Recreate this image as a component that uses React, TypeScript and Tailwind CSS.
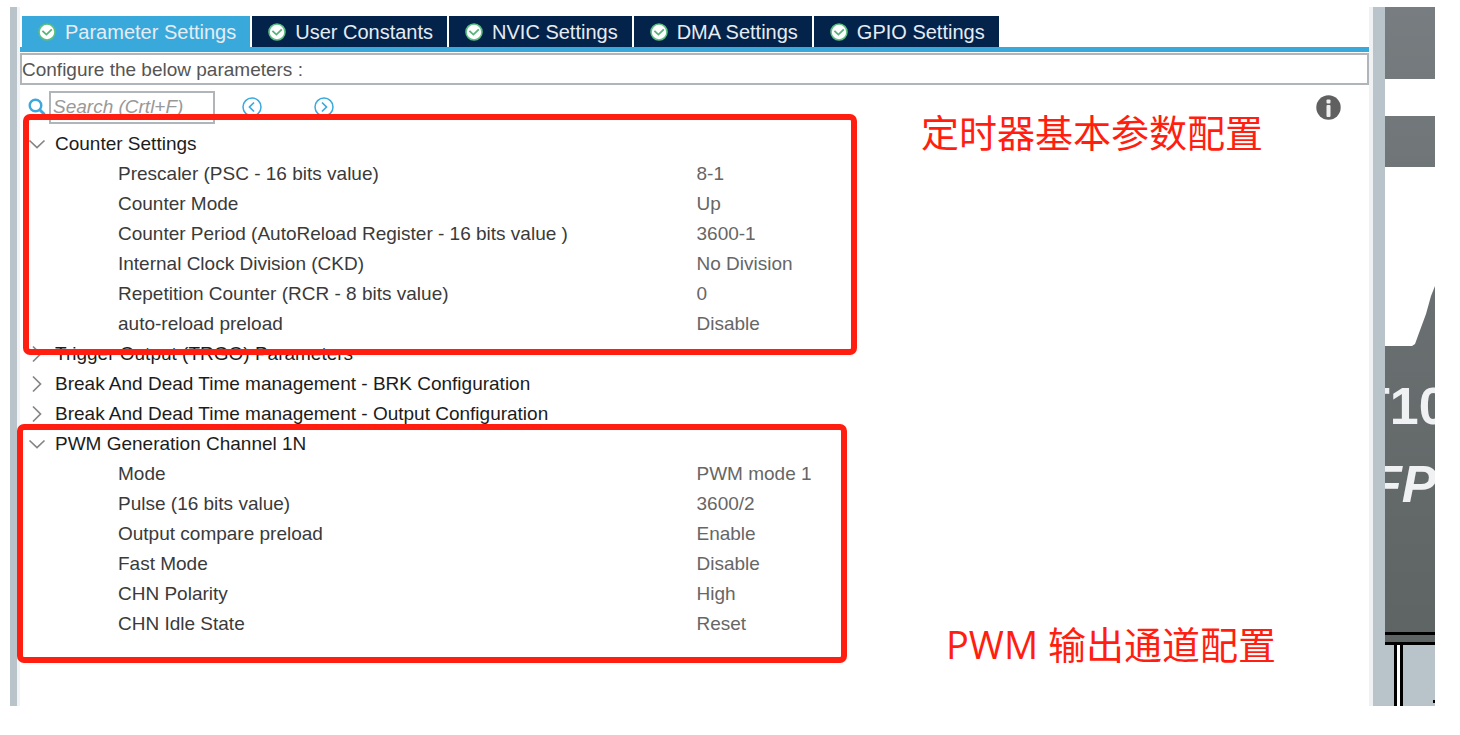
import { useState } from 'react'

const tabs = ['Parameter Settings', 'User Constants', 'NVIC Settings', 'DMA Settings', 'GPIO Settings']

type Group = { title: string; open: boolean; params: [string, string][] }

const initialGroups: Group[] = [
  {
    title: 'Counter Settings',
    open: true,
    params: [
      ['Prescaler (PSC - 16 bits value)', '8-1'],
      ['Counter Mode', 'Up'],
      ['Counter Period (AutoReload Register - 16 bits value )', '3600-1'],
      ['Internal Clock Division (CKD)', 'No Division'],
      ['Repetition Counter (RCR - 8 bits value)', '0'],
      ['auto-reload preload', 'Disable'],
    ],
  },
  { title: 'Trigger Output (TRGO) Parameters', open: false, params: [] },
  { title: 'Break And Dead Time management - BRK Configuration', open: false, params: [] },
  { title: 'Break And Dead Time management - Output Configuration', open: false, params: [] },
  {
    title: 'PWM Generation Channel 1N',
    open: true,
    params: [
      ['Mode', 'PWM mode 1'],
      ['Pulse (16 bits value)', '3600/2'],
      ['Output compare preload', 'Enable'],
      ['Fast Mode', 'Disable'],
      ['CHN Polarity', 'High'],
      ['CHN Idle State', 'Reset'],
    ],
  },
]

function CheckBadge() {
  return (
    <svg className="size-[18px] shrink-0" viewBox="0 0 18 18" aria-hidden="true">
      <circle cx="9" cy="9" r="8" fill="#fff" stroke="#5cbf80" strokeWidth="1.6" />
      <path d="M4.4 7.8L8.4 11.6L13.8 6.4" fill="none" stroke="#56b47a" strokeWidth="1.8" />
    </svg>
  )
}

function CircleArrow({ d }: { d: string }) {
  return (
    <svg className="size-[20px]" viewBox="0 0 20 20" fill="none" stroke="#3ba9de" aria-hidden="true">
      <circle cx="10" cy="10" r="9" strokeWidth="1.5" />
      <path d={d} strokeWidth="1.7" />
    </svg>
  )
}

function Chevron({ open }: { open: boolean }) {
  return (
    <svg className="size-[20px]" viewBox="0 0 20 20" fill="none" stroke="#858585" strokeWidth="1.7" aria-hidden="true">
      <path d={open ? 'M2.5 6.5L10 13.5L17.5 6.5' : 'M6 2.5L13.5 10L6 17.5'} />
    </svg>
  )
}

// Slice of the MCU package shown in the pinout view
function ChipView() {
  return (
    <svg className="h-[699px] w-[50px] shrink-0" viewBox="0 0 50 699" aria-label="Pinout view">
      <defs>
        <linearGradient id="chip" x1="0" y1="0" x2="0" y2="1">
          <stop offset="0" stopColor="#777d80" />
          <stop offset="0.5" stopColor="#696e70" />
          <stop offset="1" stopColor="#5e6363" />
        </linearGradient>
      </defs>
      <rect width="50" height="638" fill="url(#chip)" />
      <rect y="72" width="50" height="37" fill="#fff" />
      <path d="M0 160H50V279L46 289L41 307L34 326L30 337L27 339H0Z" fill="#fff" />
      <g fill="#f0f1f3" fontFamily="Liberation Sans, Arial, sans-serif" fontWeight="700" fontSize="52">
        <text x="-27" y="417">T10</text>
        <text x="-15" y="495" fontStyle="italic">FP</text>
      </g>
      <rect y="625" width="50" height="13" fill="#000" />
      <rect y="628" width="50" height="7" fill="#5e6363" />
      <rect y="638" width="50" height="61" fill="#b8c4ca" />
      <rect x="9" y="638" width="9" height="61" fill="#000" />
      <rect x="12" y="638" width="3" height="61" fill="#fff" />
      <rect x="48" y="693" width="2" height="3" fill="#000" />
    </svg>
  )
}

export default function App() {
  const [activeTab, setActiveTab] = useState(0)
  const [groups, setGroups] = useState(initialGroups)

  const toggle = (index: number) =>
    setGroups(groups.map((g, i) => (i === index ? { ...g, open: !g.open } : g)))

  return (
    <div className="relative flex bg-white pt-[7px] pr-[25px] pb-[29px] pl-[10px] font-['Liberation_Sans',Arial,sans-serif] text-[19px] leading-[30px]">
      <div className="w-[7px] shrink-0 bg-[#b8c4ca]" />
      <div className="w-[3px] shrink-0 bg-[#f2f3f5]" />

      <main className="min-w-0 flex-1 pt-[9px]">
        <div role="tablist" className="flex gap-[2px] border-b-[5px] border-[#39a9dc] pl-[2px] text-[20px]">
          {tabs.map((tab, i) => (
            <button
              key={tab}
              role="tab"
              aria-selected={i === activeTab}
              onClick={() => setActiveTab(i)}
              className={`flex h-[31px] items-center gap-[9px] pr-[14px] pl-[16px] whitespace-nowrap text-[#e6ecf2] ${
                i === activeTab ? 'bg-[#39a9dc]' : 'bg-[#03234b]'
              }`}
            >
              <CheckBadge />
              {tab}
            </button>
          ))}
        </div>

        <p className="mt-[1px] h-[32px] border-2 border-[#b0b5b9] text-[#555]">Configure the below parameters :</p>

        <div className="flex h-[44px] items-center pr-[28px] pl-[8px]">
          <label htmlFor="search" aria-label="Search" className="mr-[3px]">
            <svg className="size-[18px]" viewBox="0 0 18 18" fill="none" stroke="#3ba9de" aria-hidden="true">
              <circle cx="7.5" cy="7.5" r="5.8" strokeWidth="2.4" />
              <path d="M11.5 11.5L16.5 16.5" strokeWidth="3" />
            </svg>
          </label>
          <input
            id="search"
            type="text"
            placeholder="Search (Crtl+F)"
            className="h-[33px] w-[166px] border-2 border-[#b0b5b9] px-[2px] italic outline-none placeholder:text-[#999]"
          />
          <button aria-label="Previous match" className="ml-[27px]">
            <CircleArrow d="M12 5.5L7.5 10L12 14.5" />
          </button>
          <button aria-label="Next match" className="ml-[52px]">
            <CircleArrow d="M8 5.5L12.5 10L8 14.5" />
          </button>
          <button aria-label="Information" className="ml-auto">
            <svg className="size-[25px]" viewBox="0 0 25 25" aria-hidden="true">
              <circle cx="12.5" cy="12.5" r="12.2" fill="#606060" />
              <rect x="10.5" y="4.5" width="4" height="4" rx="1" fill="#eee" />
              <rect x="10.5" y="10" width="4" height="12" rx="1" fill="#eee" />
            </svg>
          </button>
        </div>

        {groups.map((group, i) => (
          <section key={group.title}>
            <button
              aria-expanded={group.open}
              onClick={() => toggle(i)}
              className="flex h-[30px] items-center gap-[8px] pl-[7px] text-[#1c1c1c]"
            >
              <Chevron open={group.open} />
              {group.title}
            </button>
            {group.open && group.params.length > 0 && (
              <table className="w-full table-fixed border-collapse">
                <tbody>
                  {group.params.map(([name, value]) => (
                    <tr key={name} className="h-[30px]">
                      <th scope="row" className="w-1/2 p-0 pl-[98px] text-left font-normal whitespace-nowrap text-[#3a3a3a]">
                        {name}
                      </th>
                      <td className="p-0 pl-[2px] whitespace-nowrap text-[#666]">{value}</td>
                    </tr>
                  ))}
                </tbody>
              </table>
            )}
          </section>
        ))}
      </main>

      <div className="w-[4px] shrink-0 bg-[#f0f1f2]" />
      <div className="w-[12px] shrink-0 bg-[#b8c4ca]" />
      <ChipView />

      {/* Callouts drawn over the settings */}
      <div className="pointer-events-none absolute top-[114px] left-[23px] h-[241px] w-[834px] rounded-[7px] border-6 border-[#ff1e10]" />
      <div className="pointer-events-none absolute top-[424px] left-[17px] h-[239px] w-[830px] rounded-[7px] border-6 border-[#ff1e10]" />
      <p className="absolute top-[104px] left-[921px] font-['Open_Sans','Noto_Sans_CJK_SC',sans-serif] text-[38px] leading-[56px] whitespace-nowrap text-[#ff1e10]">
        定时器基本参数配置
      </p>
      <p className="absolute top-[616px] left-[946px] font-['Open_Sans','Noto_Sans_CJK_SC',sans-serif] text-[38px] leading-[56px] whitespace-nowrap text-[#ff1e10]">
        PWM 输出通道配置
      </p>
    </div>
  )
}
